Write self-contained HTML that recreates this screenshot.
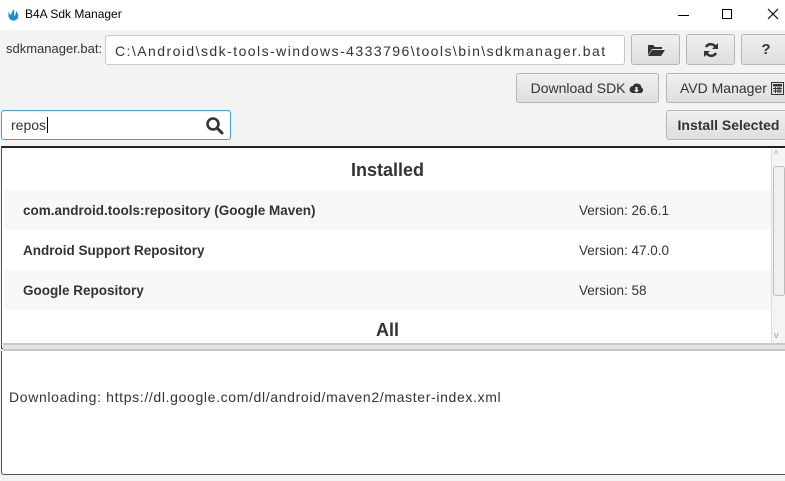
<!DOCTYPE html>
<html><head><style>
*{box-sizing:border-box;margin:0;padding:0}
body{width:785px;height:481px;overflow:hidden;background:#f3f3f3;font-family:"Liberation Sans",sans-serif;position:relative;color:#333}
.a{position:absolute}
.btn{position:absolute;border:1px solid #b5b5b5;border-radius:3px;background:linear-gradient(#f0f0f0,#dedede);font-size:14px;color:#333;display:flex;align-items:center;justify-content:center}
.row{position:absolute;left:4px;width:767px;height:40px;font-size:13.5px;font-weight:bold;color:#333}
.row span{position:absolute;top:13px}
.row .v{left:575px;font-weight:normal}
</style></head><body>
<div class="a" style="left:0;top:0;width:785px;height:30px;background:#fff"></div>
<svg class="a" style="left:6px;top:8px" width="14" height="14" viewBox="0 0 14 14"><path d="M3 3 Q1 9 5 12 Q9 14 12 10 Q13 6 10 3 Q10 7 8 8 Q9 4 7 1 Q6 6 4 7 Q3 5 3 3Z" fill="#1a8fd8"/></svg>
<div class="a" style="left:25px;top:7px;font-size:12px;color:#000">B4A Sdk Manager</div>
<div class="a" style="left:678px;top:15px;width:11px;height:1px;background:#000"></div>
<div class="a" style="left:722px;top:9px;width:10px;height:10px;border:1px solid #000"></div>
<svg class="a" style="left:767px;top:8px" width="12" height="12"><path d="M1 1L11 11M11 1L1 11" stroke="#000" stroke-width="1.1"/></svg>
<div class="a" style="left:6px;top:41px;font-size:13px">sdkmanager.bat:</div>
<div class="a" style="left:105px;top:35px;width:520px;height:30px;background:#fff;border:1px solid #c8c8c8;border-radius:3px;font-size:14px;padding:7px 0 0 9px;letter-spacing:1.45px;white-space:nowrap;overflow:hidden">C:\Android\sdk-tools-windows-4333796\tools\bin\sdkmanager.bat</div>
<div class="btn" style="left:631px;top:34px;width:49px;height:31px"><svg width="18" height="14" viewBox="0 0 18 14"><path d="M1 2h5l2 2h7v2H5L1 12Z" fill="#333"/><path d="M5 7h13l-4 6H1Z" fill="#333"/></svg></div>
<div class="btn" style="left:686px;top:34px;width:49px;height:31px"><svg width="16" height="16" viewBox="0 0 16 16"><path d="M13 6A5.5 5.5 0 0 0 3 5" fill="none" stroke="#333" stroke-width="2.6"/><path d="M3 10A5.5 5.5 0 0 0 13 11" fill="none" stroke="#333" stroke-width="2.6"/><path d="M15 1v6H9Z" fill="#333"/><path d="M1 15V9h6Z" fill="#333"/></svg></div>
<div class="btn" style="left:741px;top:34px;width:50px;height:31px;font-weight:bold;font-size:15px">?</div>
<div class="btn" style="left:516px;top:73px;width:143px;height:30px">Download SDK&nbsp;<svg width="15" height="11" viewBox="0 0 15 11"><path d="M4 10a3.5 3.5 0 0 1 0-7 4.5 4.5 0 0 1 8.5 1.5A3 3 0 0 1 12 10Z" fill="#333"/><path d="M6.5 4h2v3h1.5l-2.5 2.5L5 7h1.5Z" fill="#fff"/></svg></div>
<div class="btn" style="left:666px;top:73px;width:125px;height:30px;justify-content:flex-start;padding-left:13px">AVD Manager&nbsp;<svg width="13" height="13"><rect x=".5" y=".5" width="12" height="12" fill="none" stroke="#333"/><rect x="2" y="2" width="9" height="2.5" fill="#333"/><path d="M2 6.5h9M2 9h9M4.5 5v6M7 5v6M9 5v6" stroke="#333"/></svg></div>
<div class="a" style="left:1px;top:110px;width:230px;height:30px;background:#fff;border:1.5px solid #3ea0e0;border-radius:3px;font-size:14px;padding:6px 0 0 9px">repos<span style="border-left:1px solid #000;margin-left:1px"></span></div>
<svg class="a" style="left:205px;top:116px" width="19" height="19"><circle cx="8" cy="8" r="5.5" fill="none" stroke="#333" stroke-width="2.6"/><path d="M12 12l5 5" stroke="#333" stroke-width="3" stroke-linecap="round"/></svg>
<div class="btn" style="left:666px;top:110px;width:125px;height:30px;font-weight:bold">Install Selected</div>
<div class="a" style="left:1px;top:146px;width:790px;height:203px;background:#fff;border:1px solid #555;border-top:2px solid #222"></div>
<div class="a" style="left:4px;top:160px;width:767px;text-align:center;font-size:18px;font-weight:bold">Installed</div>
<div class="row" style="top:190px;background:#f8f8f8"><span style="left:19px">com.android.tools:repository (Google Maven)</span><span class="v">Version: 26.6.1</span></div>
<div class="row" style="top:230px"><span style="left:19px">Android Support Repository</span><span class="v">Version: 47.0.0</span></div>
<div class="row" style="top:270px;background:#f8f8f8"><span style="left:19px">Google Repository</span><span class="v">Version: 58</span></div>
<div class="a" style="left:4px;top:320px;width:767px;text-align:center;font-size:18px;font-weight:bold">All</div>
<div class="a" style="left:771px;top:149px;width:14px;height:194px;background:#f4f4f4;border-left:1px solid #ddd"></div>
<div class="a" style="left:773px;top:166px;width:12px;height:130px;background:#f0f0f0;border:1px solid #bbb;border-radius:3px"></div>
<div class="a" style="left:774px;top:149px;font-size:9px;color:#999">^</div>
<div class="a" style="left:774px;top:330px;font-size:9px;color:#999">v</div>
<div class="a" style="left:3px;top:343px;width:782px;height:8px;background:#e4e4e4;border-top:2px solid #c8c8c8;border-bottom:2px solid #c8c8c8"></div>
<div class="a" style="left:1px;top:351px;width:790px;height:124px;background:#fff;border:1px solid #555;border-top:none;border-radius:0 0 0 3px"></div>
<div class="a" style="left:9px;top:389px;font-size:14px;letter-spacing:0.65px;white-space:nowrap">Downloading: https://dl.google.com/dl/android/maven2/master-index.xml</div>
</body></html>
